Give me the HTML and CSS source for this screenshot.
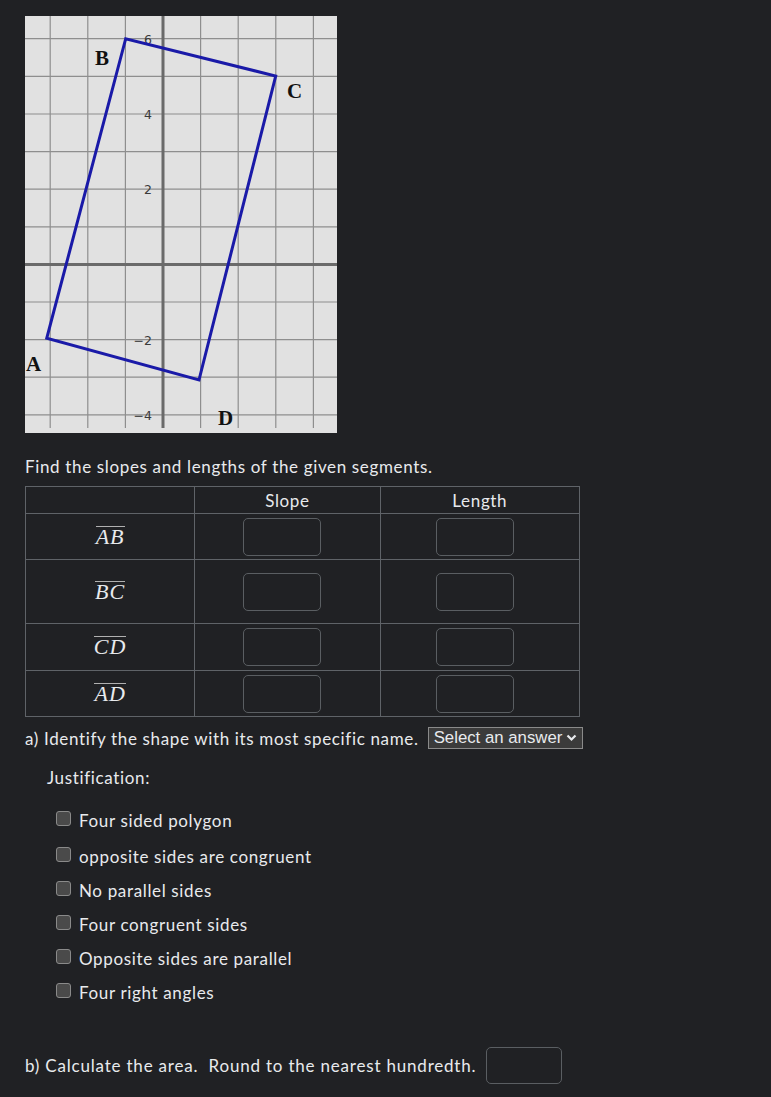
FILE: index.html
```html
<!DOCTYPE html>
<html>
<head>
<meta charset="utf-8">
<link rel="stylesheet" href="styles.css">
</head>
<body>
<div class="page">
  <div class="graph">
    <svg width="312" height="417" viewBox="0 0 312 417">
      <rect x="0" y="0" width="312" height="417" fill="#e1e1e1"/>
      <g stroke="#8e8e8e" stroke-width="1.2">
        <line x1="25.2" y1="0" x2="25.2" y2="412"/>
        <line x1="62.8" y1="0" x2="62.8" y2="412"/>
        <line x1="100.4" y1="0" x2="100.4" y2="412"/>
        <line x1="175.6" y1="0" x2="175.6" y2="412"/>
        <line x1="213.2" y1="0" x2="213.2" y2="412"/>
        <line x1="250.8" y1="0" x2="250.8" y2="412"/>
        <line x1="288.4" y1="0" x2="288.4" y2="412"/>
        <line x1="0" y1="22.7" x2="312" y2="22.7"/>
        <line x1="0" y1="60.3" x2="312" y2="60.3"/>
        <line x1="0" y1="98" x2="312" y2="98"/>
        <line x1="0" y1="135.6" x2="312" y2="135.6"/>
        <line x1="0" y1="173.2" x2="312" y2="173.2"/>
        <line x1="0" y1="210.8" x2="312" y2="210.8"/>
        <line x1="0" y1="286" x2="312" y2="286"/>
        <line x1="0" y1="323.6" x2="312" y2="323.6"/>
        <line x1="0" y1="361.2" x2="312" y2="361.2"/>
        <line x1="0" y1="398.8" x2="312" y2="398.8"/>
      </g>
      <g stroke="#6a6a6a" stroke-width="3">
        <line x1="138" y1="0" x2="138" y2="412"/>
        <line x1="0" y1="248.4" x2="312" y2="248.4"/>
      </g>
      <g class="ticks" font-size="12.5" fill="#3a3a3a" text-anchor="end">
        <text x="127" y="27.5">6</text>
        <text x="127" y="103">4</text>
        <text x="127" y="178">2</text>
        <text x="127" y="328.5">−2</text>
        <text x="127" y="404">−4</text>
      </g>
      <polygon points="21.7,322.3 100.7,22.7 250.7,60 174,364" fill="none" stroke="#1a1aa8" stroke-width="3" stroke-linejoin="miter"/>
      <g class="pt" font-size="21" font-weight="bold" fill="#111">
        <text x="70" y="49">B</text>
        <text x="262" y="82">C</text>
        <text x="1" y="355">A</text>
        <text x="193" y="409">D</text>
      </g>
    </svg>
  </div>

  <p class="intro">Find the slopes and lengths of the given segments.</p>

  <table class="seg">
    <tr class="head">
      <th class="c1"></th>
      <th class="c2">Slope</th>
      <th class="c3">Length</th>
    </tr>
    <tr class="r r1">
      <td class="lab"><span class="ov">AB</span></td>
      <td><span class="box"></span></td>
      <td><span class="box"></span></td>
    </tr>
    <tr class="r r2">
      <td class="lab"><span class="ov">BC</span></td>
      <td><span class="box"></span></td>
      <td><span class="box"></span></td>
    </tr>
    <tr class="r r3">
      <td class="lab"><span class="ov">CD</span></td>
      <td><span class="box"></span></td>
      <td><span class="box"></span></td>
    </tr>
    <tr class="r r4">
      <td class="lab"><span class="ov">AD</span></td>
      <td><span class="box"></span></td>
      <td><span class="box"></span></td>
    </tr>
  </table>

  <div class="qa">
    <span>a) Identify the shape with its most specific name.</span>
    <span class="select">Select an answer
      <svg width="11" height="8" viewBox="0 0 11 8"><path d="M1.5 1.5 L5.5 5.5 L9.5 1.5" fill="none" stroke="#e8eaed" stroke-width="2.2"/></svg>
    </span>
  </div>

  <p class="just">Justification:</p>

  <ul class="checks">
    <li class="first"><span class="cb"></span>Four sided polygon</li>
    <li><span class="cb"></span>opposite sides are congruent</li>
    <li><span class="cb"></span>No parallel sides</li>
    <li><span class="cb"></span>Four congruent sides</li>
    <li><span class="cb"></span>Opposite sides are parallel</li>
    <li><span class="cb"></span>Four right angles</li>
  </ul>

  <div class="qb">
    <span>b) Calculate the area.&nbsp; Round to the nearest hundredth.</span>
    <span class="box areabox"></span>
  </div>
</div>
</body>
</html>
```

FILE: styles.css
```css
html, body {
  margin: 0;
  padding: 0;
  background: #202124;
}
body {
  color: #e8eaed;
  font-family: Lato, "Open Sans", sans-serif;
  font-size: 17px;
  letter-spacing: 0.65px;
}
.page {
  padding: 16px 0 0 25px;
}
.graph {
  width: 312px;
  height: 417px;
  overflow: hidden;
}
.graph svg { display: block; }
.ticks { font-family: "DejaVu Sans", sans-serif; letter-spacing: 0; }
.pt { font-family: "Liberation Serif", serif; letter-spacing: 0; }

.intro {
  margin: 22px 0 0 0;
  line-height: 24px;
  height: 24px;
}
.seg {
  margin-top: 7px;
  border-collapse: collapse;
  width: 555px;
}
.seg th, .seg td {
  border: 1px solid #5f6368;
  padding: 0;
  text-align: center;
  vertical-align: middle;
}
.seg th {
  font-weight: normal;
  height: 24px;
  line-height: 24px;
  padding-top: 2px;
}
.c1 { width: 169px; }
.c2 { width: 185px; }
.c3 { width: 199px; }
.r1 td { height: 45px; }
.r2 td { height: 63px; }
.r3 td { height: 46px; }
.r4 td { height: 45px; }
.box {
  display: inline-block;
  width: 76px;
  height: 36px;
  border: 1px solid #5a5e62;
  border-radius: 5px;
  vertical-align: middle;
  margin-right: 10px;
}
.lab { padding-top: 2px; }
.ov {
  display: inline-block;
  font-family: "Liberation Serif", serif;
  font-style: italic;
  font-size: 22px;
  letter-spacing: 1px;
  line-height: 18px;
  border-top: 1.5px solid #b0b0b0;
  padding-top: 1px;
}
.qa {
  display: flex;
  align-items: center;
  gap: 9px;
  margin-top: 10px;
  height: 22px;
}
.select {
  display: inline-flex;
  align-items: center;
  gap: 4px;
  height: 20px;
  padding: 0 5px 0 5px;
  border: 1px solid #8a8a8a;
  background: #3b3b3b;
  font-family: "Liberation Sans", Arial, sans-serif;
  font-size: 16.8px;
  letter-spacing: 0;
  color: #e8eaed;
}
.just {
  margin: 17px 0 0 22px;
  line-height: 24px;
}
.checks {
  list-style: none;
  margin: 19px 0 0 31px;
  padding: 0;
}
.checks li {
  display: flex;
  align-items: center;
  height: 24px;
  margin-top: 10px;
  line-height: 24px;
}
.checks li.first { margin-top: 0; }
.checks li:nth-child(2) { margin-top: 12px; }
.cb {
  display: inline-block;
  width: 13px;
  height: 13px;
  border: 1px solid #8a8a8a;
  border-radius: 3px;
  background: #4a4a4a;
  margin-right: 8px;
  margin-top: -5px;
}
.qb {
  display: flex;
  align-items: center;
  gap: 10px;
  margin-top: 42px;
  letter-spacing: 0.8px;
}
.areabox {
  width: 74px;
  height: 35px;
  margin: 0;
}
```
